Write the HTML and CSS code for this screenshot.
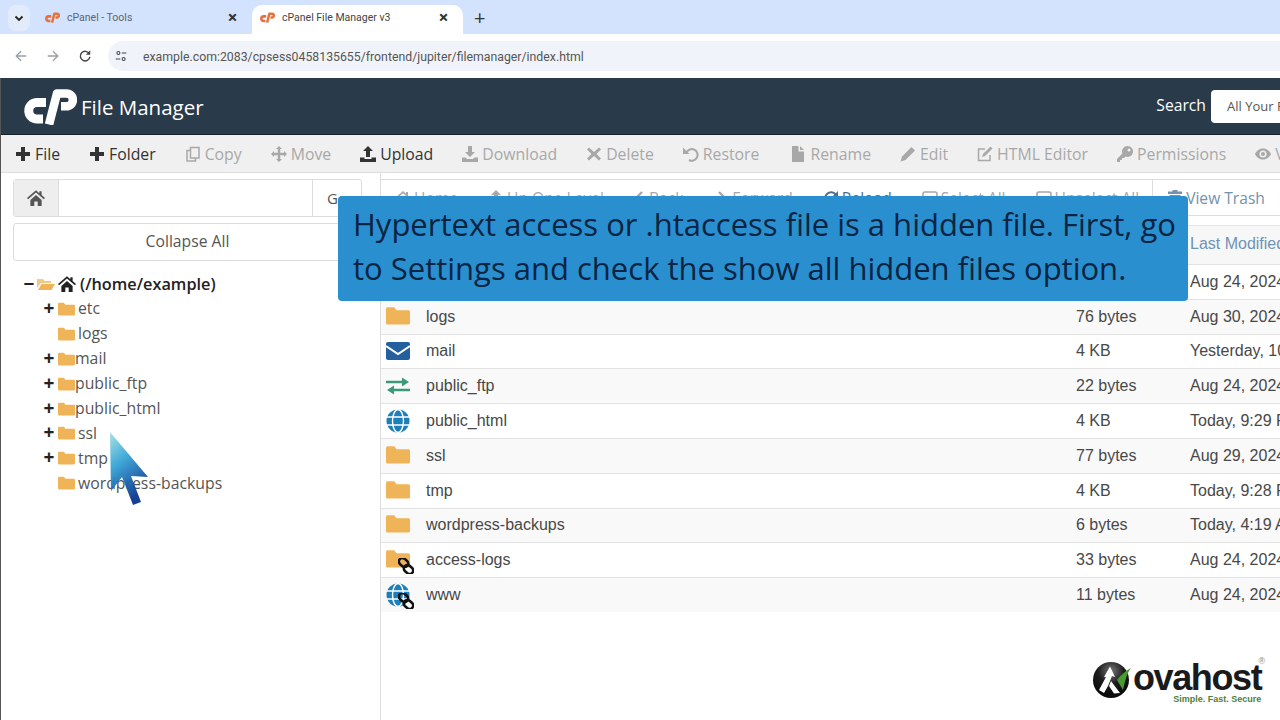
FILE: index.html

```html
<!DOCTYPE html>
<html lang="en">
<head>
  <meta charset="UTF-8" />
  <meta name="viewport" content="width=device-width, initial-scale=1.0"/>
  <title>cPanel File Manager v3</title>
  <link rel="stylesheet" href="styles.css">
</head>
<body>
  <svg class="sprite" xmlns="http://www.w3.org/2000/svg">
    <symbol id="i-cp" viewBox="0 0 53 37"><path fill="none" stroke="currentColor" stroke-width="9" d="M22 14.500H13a8.250 8.250 0 0 0 0 16.500h6"/><path fill="none" stroke="currentColor" stroke-width="8.600" stroke-linejoin="round" d="M25 36.500L33 5.500H42.500a6.400 6.400 0 0 1 0 12.800H37"/></symbol>
    <symbol id="i-plus" viewBox="0 0 16 16"><path d="M6 1h4v5h5v4h-5v5H6v-5H1V6h5z"/></symbol>
    <symbol id="i-copy" viewBox="0 0 16 16"><path fill="none" stroke="currentColor" stroke-width="1.500" d="M5.500 1.500h8.500v10.500H5.500zM5.500 4.500H2v10.500h8.500V12"/></symbol>
    <symbol id="i-move" viewBox="0 0 16 16"><path d="M8 0l3 3H9.200v3.800H13V5l3 3-3 3V9.200H9.200V13H11l-3 3-3-3h1.800V9.200H3V11L0 8l3-3v1.800h3.800V3H5z"/></symbol>
    <symbol id="i-upload" viewBox="0 0 16 16"><path d="M8 0l5 5h-3v6H6V5H3zM0 11.500h4.500v1.500h7v-1.500H16V16H0z"/></symbol>
    <symbol id="i-download" viewBox="0 0 16 16"><path d="M6 0h4v6h3l-5 5-5-5h3zM0 11.500h3.500l1.500 1.500h6l1.500-1.500H16V16H0z"/></symbol>
    <symbol id="i-times" viewBox="0 0 16 16"><path d="M3 1.500l5 4.500 5-4.500L15 3.500 10.500 8l4.500 4.500-2 2-5-4.500-5 4.500-2-2L5.500 8 1 3.500z"/></symbol>
    <symbol id="i-undo" viewBox="0 0 16 16"><path fill="none" stroke="currentColor" stroke-width="2" d="M3.500 6.500A5.800 5.800 0 1 1 6 14"/><path d="M0 1.500l6.500 6.500H0z"/></symbol>
    <symbol id="i-file" viewBox="0 0 16 16"><path d="M2 0h6.500v5.500H14V16H2zM10 0l4 4h-4z"/></symbol>
    <symbol id="i-pencil" viewBox="0 0 16 16"><path d="M11.500 1l3.500 3.500-9.500 9.500-5 1.500 1.500-5z"/></symbol>
    <symbol id="i-edit" viewBox="0 0 16 16"><path fill="none" stroke="currentColor" stroke-width="1.500" d="M13 9v5.500H1.500V3H8"/><path d="M13.500 0.500l2 2-7.500 7.500-3 1 1-3z"/></symbol>
    <symbol id="i-key" viewBox="0 0 16 16"><path fill-rule="evenodd" d="M10.500 0a5.500 5.500 0 1 1-2 10.600L7 12H5v2H3v2H0v-3l5.400-5.400A5.500 5.500 0 0 1 10.500 0zm1.500 2.500a1.500 1.500 0 1 0 0 3 1.500 1.500 0 0 0 0-3z"/></symbol>
    <symbol id="i-eye" viewBox="0 0 16 16"><path fill-rule="evenodd" d="M0 8c2-4 5-5.500 8-5.500S14 4 16 8c-2 4-5 5.500-8 5.500S2 12 0 8zm8-3.500a3.500 3.500 0 1 0 0 7 3.500 3.500 0 0 0 0-7zM8 6a2 2 0 1 1 0 4 2 2 0 0 1 0-4z"/></symbol>
    <symbol id="i-home" viewBox="0 0 16 16"><path d="M8 1L0 8l1 1.200 7-6 7 6L16 8l-3-2.600V2h-2v1.700zM3 9.800L8 5.400l5 4.400V15H9.500v-4h-3v4H3z"/></symbol>
    <symbol id="i-folder" viewBox="0 0 16 16"><path d="M0 3.500a1 1 0 0 1 1-1h4.500l1.500 2h8a1 1 0 0 1 1 1v8a1 1 0 0 1-1 1H1a1 1 0 0 1-1-1z"/></symbol>
    <symbol id="i-dir" viewBox="0 0 16 16"><path d="M0 2.500a1 1 0 0 1 1-1h4.500l1.500 2h8a1 1 0 0 1 1 1v7.500a1 1 0 0 1-1 1H1a1 1 0 0 1-1-1z"/></symbol>
    <symbol id="i-folder-open" viewBox="0 0 18 16"><path opacity=".75" d="M0 3h6l1.500 2H14v2H4L0 12z"/><path d="M4.500 8H18l-3.500 6H1z"/></symbol>
    <symbol id="i-link" viewBox="0 0 16 16"><g fill="none" stroke="currentColor" stroke-width="2.600"><rect x="0.500" y="1" width="10" height="7" rx="3.500" transform="rotate(40 5.500 4.500)"/><rect x="5.500" y="8" width="10" height="7" rx="3.500" transform="rotate(40 10.500 11.500)"/></g></symbol>
    <symbol id="i-mail" viewBox="0 0 24 18"><rect width="24" height="18" rx="2" fill="#24609f"/><path fill="none" stroke="#fff" stroke-width="2" d="M0 4l12 8 12-8"/></symbol>
    <symbol id="i-ftp" viewBox="0 0 24 18"><path fill="#3c9a7c" d="M0 3.800h16V.500L23 5l-7 4.500V6.200H0zM24 11.800H8V8.500L1 13l7 4.500v-3.300h16z"/></symbol>
    <symbol id="i-globe" viewBox="0 0 24 24"><circle cx="12" cy="12" r="11.500" fill="#1d7fb9"/><g fill="none" stroke="#fff" stroke-width="1.400"><ellipse cx="12" cy="12" rx="5.500" ry="11.500"/><path d="M1 8h22M1 16h22"/></g></symbol>
    <symbol id="i-trash" viewBox="0 0 16 16"><path d="M5.500 0h5v1.500H15V4H1V1.500h4.500zM2.500 5h11v11h-11z"/></symbol>
    <symbol id="i-reload" viewBox="0 0 16 16"><path fill="none" stroke="currentColor" stroke-width="2" d="M13 5a6 6 0 1 0 1 4"/><path d="M15 1v6H9z"/></symbol>
    <symbol id="i-square" viewBox="0 0 16 16"><rect x="1" y="2" width="14" height="12" rx="2" fill="none" stroke="currentColor" stroke-width="1.600"/></symbol>
    <symbol id="i-prev" viewBox="0 0 10 16"><path fill="none" stroke="currentColor" stroke-width="2.400" d="M8 2L2 8l6 6"/></symbol>
    <symbol id="i-next" viewBox="0 0 10 16"><path fill="none" stroke="currentColor" stroke-width="2.400" d="M2 2l6 6-6 6"/></symbol>
  </svg>

  <div class="tabstrip">
    <div class="tab-menu">
      <svg width="10" height="10" viewBox="0 0 10 10"><path fill="none" stroke="#222" stroke-width="1.800" d="M1.500 3.500L5 7l3.500-3.500"/></svg>
    </div>
    <div class="tab">
      <svg class="favicon"><use href="#i-cp"/></svg>
      <span class="tab-title">cPanel - Tools</span>
      <span class="tab-x">×</span>
    </div>
    <div class="tab active">
      <svg class="favicon"><use href="#i-cp"/></svg>
      <span class="tab-title">cPanel File Manager v3</span>
      <span class="tab-x">×</span>
    </div>
    <span class="tab-new">+</span>
  </div>

  <div class="addrbar">
    <svg class="nav" viewBox="0 0 16 16"><path fill="none" stroke="#9aa0a6" stroke-width="1.500" d="M14 8H2.500M8 2.500L2.500 8 8 13.500"/></svg>
    <svg class="nav" viewBox="0 0 16 16"><path fill="none" stroke="#9aa0a6" stroke-width="1.500" d="M2 8h11.500M8 2.500L13.500 8 8 13.500"/></svg>
    <svg class="nav" viewBox="0 0 16 16"><path fill="none" stroke="#444" stroke-width="1.600" d="M13 5.500a5.500 5.500 0 1 0 .6 3.500"/><path fill="#444" d="M14 1.500v5H9z"/></svg>
    <div class="urlpill">
      <svg class="tune" viewBox="0 0 16 16"><g fill="none" stroke="#444" stroke-width="1.400"><circle cx="4.500" cy="4" r="2"/><path d="M9 4h6M1 12h6"/><circle cx="11.500" cy="12" r="2"/></g></svg>
      <span class="url">example.com:2083/cpsess0458135655/frontend/jupiter/filemanager/index.html</span>
    </div>
  </div>

  <div class="app">
    <header class="topbar">
      <svg class="logo"><use href="#i-cp"/></svg>
      <span class="product">File Manager</span>
      <div class="search">
        <span class="search-label">Search</span>
        <div class="search-select">All Your Files</div>
      </div>
    </header>

    <nav class="toolbar">
      <a class="tool on"><svg><use href="#i-plus"/></svg>File</a>
      <a class="tool on"><svg><use href="#i-plus"/></svg>Folder</a>
      <a class="tool"><svg><use href="#i-copy"/></svg>Copy</a>
      <a class="tool"><svg><use href="#i-move"/></svg>Move</a>
      <a class="tool on"><svg><use href="#i-upload"/></svg>Upload</a>
      <a class="tool"><svg><use href="#i-download"/></svg>Download</a>
      <a class="tool"><svg><use href="#i-times"/></svg>Delete</a>
      <a class="tool"><svg><use href="#i-undo"/></svg>Restore</a>
      <a class="tool wide"><svg><use href="#i-file"/></svg>Rename</a>
      <a class="tool"><svg><use href="#i-pencil"/></svg>Edit</a>
      <a class="tool"><svg><use href="#i-edit"/></svg>HTML Editor</a>
      <a class="tool"><svg><use href="#i-key"/></svg>Permissions</a>
      <a class="tool"><svg><use href="#i-eye"/></svg>View</a>
    </nav>

    <div class="main">
      <aside class="left">
        <div class="pathbox">
          <span class="pathhome"><svg><use href="#i-home"/></svg></span>
          <span class="pathinput"></span>
          <span class="pathgo">Go</span>
        </div>
        <div class="collapse">Collapse All</div>
        <ul class="tree">
          <li class="root">
            <span class="sign">−</span>
            <svg class="tf-open"><use href="#i-folder-open"/></svg>
            <svg class="tf-home"><use href="#i-home"/></svg>
            <b>(/home/example)</b>
          </li>
          <li><span class="sign">+</span><svg class="tf"><use href="#i-folder"/></svg><span class="far">etc</span></li>
          <li><span class="sign"></span><svg class="tf"><use href="#i-folder"/></svg><span class="far">logs</span></li>
          <li><span class="sign">+</span><svg class="tf"><use href="#i-folder"/></svg><span>mail</span></li>
          <li><span class="sign">+</span><svg class="tf"><use href="#i-folder"/></svg><span>public_ftp</span></li>
          <li><span class="sign">+</span><svg class="tf"><use href="#i-folder"/></svg><span>public_html</span></li>
          <li><span class="sign">+</span><svg class="tf"><use href="#i-folder"/></svg><span class="far">ssl</span></li>
          <li><span class="sign">+</span><svg class="tf"><use href="#i-folder"/></svg><span class="far">tmp</span></li>
          <li><span class="sign"></span><svg class="tf"><use href="#i-folder"/></svg><span class="far">wordpress-backups</span></li>
        </ul>
      </aside>

      <section class="right">
        <div class="actions">
          <a class="act home"><svg><use href="#i-home"/></svg>Home</a>
          <a class="act up"><svg><use href="#i-upload"/></svg>Up One Level</a>
          <a class="act chev"><svg><use href="#i-prev"/></svg>Back</a>
          <a class="act chev next"><svg><use href="#i-next"/></svg>Forward</a>
          <a class="act strong"><svg><use href="#i-reload"/></svg>Reload</a>
          <a class="act"><svg><use href="#i-square"/></svg>Select All</a>
          <a class="act"><svg><use href="#i-square"/></svg>Unselect All</a>
          <a class="act trash"><svg><use href="#i-trash"/></svg>View Trash</a>
        </div>
        <div class="thead">
          <span class="c-name">Name</span>
          <span class="c-size">Size</span>
          <span class="c-date">Last Modified</span>
        </div>
        <div class="row"><span class="c-icon"><svg class="fi"><use href="#i-dir"/></svg></span><span class="c-name">etc</span><span class="c-size">4 KB</span><span class="c-date">Aug 24, 2024</span></div>
        <div class="row"><span class="c-icon"><svg class="fi"><use href="#i-dir"/></svg></span><span class="c-name">logs</span><span class="c-size">76 bytes</span><span class="c-date">Aug 30, 2024</span></div>
        <div class="row"><span class="c-icon"><svg class="fi mail"><use href="#i-mail"/></svg></span><span class="c-name">mail</span><span class="c-size">4 KB</span><span class="c-date">Yesterday, 10:12 PM</span></div>
        <div class="row"><span class="c-icon"><svg class="fi mail"><use href="#i-ftp"/></svg></span><span class="c-name">public_ftp</span><span class="c-size">22 bytes</span><span class="c-date">Aug 24, 2024</span></div>
        <div class="row"><span class="c-icon"><svg class="fi"><use href="#i-globe"/></svg></span><span class="c-name">public_html</span><span class="c-size">4 KB</span><span class="c-date">Today, 9:29 PM</span></div>
        <div class="row"><span class="c-icon"><svg class="fi"><use href="#i-dir"/></svg></span><span class="c-name">ssl</span><span class="c-size">77 bytes</span><span class="c-date">Aug 29, 2024</span></div>
        <div class="row"><span class="c-icon"><svg class="fi"><use href="#i-dir"/></svg></span><span class="c-name">tmp</span><span class="c-size">4 KB</span><span class="c-date">Today, 9:28 PM</span></div>
        <div class="row"><span class="c-icon"><svg class="fi"><use href="#i-dir"/></svg></span><span class="c-name">wordpress-backups</span><span class="c-size">6 bytes</span><span class="c-date">Today, 4:19 AM</span></div>
        <div class="row"><span class="c-icon"><svg class="fi"><use href="#i-dir"/></svg><svg class="linked"><use href="#i-link"/></svg></span><span class="c-name">access-logs</span><span class="c-size">33 bytes</span><span class="c-date">Aug 24, 2024</span></div>
        <div class="row"><span class="c-icon"><svg class="fi"><use href="#i-globe"/></svg><svg class="linked"><use href="#i-link"/></svg></span><span class="c-name">www</span><span class="c-size">11 bytes</span><span class="c-date">Aug 24, 2024</span></div>
      </section>
    </div>
  </div>

  <div class="caption">Hypertext access or .htaccess file is a hidden file. First, go to Settings and check the show all hidden files option.</div>

  <svg class="cursor" viewBox="0 0 40 74">
    <defs>
      <linearGradient id="cursor-fill" x1="0" y1="0" x2="0.400" y2="1">
        <stop offset="0" stop-color="#a5e4e6"/>
        <stop offset="0.450" stop-color="#35a3d6"/>
        <stop offset="1" stop-color="#0b3690"/>
      </linearGradient>
    </defs>
    <path fill="url(#cursor-fill)" d="M0 0L38 45 21 44 31 70 23 73 12 45 1 59z"/>
  </svg>

  <div class="brand">
    <svg class="brand-mark" viewBox="0 0 40 40">
      <defs>
        <radialGradient id="brand-gloss" cx="0.500" cy="0.250" r="0.650">
          <stop offset="0" stop-color="#777"/>
          <stop offset="0.550" stop-color="#1c1c1c"/>
          <stop offset="1" stop-color="#0c0c0c"/>
        </radialGradient>
      </defs>
      <circle cx="20" cy="21" r="18" fill="url(#brand-gloss)"/>
      <path fill="#fff" d="M19 7.500L24 18l-3-1-4 10-4 7-5-3 7-13-2 0zM20 22l9 12-6 .500-5-7.500z"/>
      <path fill="#4a9a30" d="M26 21C29 17 34 12 40 9 36 14 34 22 32 31z"/>
    </svg>
    <div class="brand-text">
      <span class="brand-name">ovahost</span>
      <span class="brand-tag">Simple. Fast. Secure</span>
    </div>
    <span class="brand-reg">®</span>
  </div>
</body>
</html>
```

FILE: styles.css

```css
* {
  margin: 0; padding: 0; box-sizing: border-box;
}
html, body {
  width: 1280px;
  height: 720px;
  overflow: hidden;
}
body {
  background: #fff;
  color: #333;
  font-family: "Open Sans", "Liberation Sans", sans-serif;
  position: relative;
}
.sprite {
  display: none;
}

/* browser chrome */
.tabstrip {
  height: 34px;
  background: #d3e3fd;
  display: flex;
  align-items: flex-end;
  padding-left: 8px;
}
.tab-menu {
  width: 22px;
  height: 26px;
  margin-bottom: 3px;
  background: #e2ebfa;
  border-radius: 8px;
  display: flex;
  align-items: center;
  justify-content: center;
}
.tab {
  width: 222px;
  height: 29px;
  padding: 0 15px 4px 15px;
  display: flex;
  align-items: center;
  font-family: "Roboto", sans-serif;
  font-size: 10.5px;
  color: #5d6470;
}
.tab.active {
  background: #fff;
  border-radius: 10px 10px 0 0;
  width: 211px;
  padding-left: 8px;
  color: #444;
}
.favicon {
  width: 15px;
  height: 11px;
  color: #e8703a;
  margin-right: 7px;
  flex: none;
}
.tab-title {
  flex: 1;
}
.tab-x {
  font-size: 17px;
  font-weight: 700;
  color: #333;
  line-height: 1;
}
.tab-new {
  margin: 0 0 6px 11px;
  font-size: 20px;
  line-height: 1;
  color: #333;
}
.addrbar {
  height: 44px;
  background: #fff;
  display: flex;
  align-items: center;
  padding-left: 14px;
  gap: 18px;
}
.nav {
  width: 14px;
  height: 14px;
  flex: none;
}
.urlpill {
  flex: 1;
  height: 30px;
  margin-left: -2px;
  background: #f0f4fa;
  border-radius: 15px 0 0 15px;
  display: flex;
  align-items: center;
  padding-left: 7px;
}
.tune {
  width: 12px;
  height: 12px;
  margin-right: 16px;
}
.url {
  font-family: "Roboto", sans-serif;
  font-size: 12.300px;
  color: #555;
  padding-top: 1px;
}

/* cpanel page */
.app {
  border-left: 1px solid #555;
  height: 642px;
}
.topbar {
  height: 57px;
  background: #293a4a;
  border-bottom: 1px solid #16212b;
  display: flex;
  align-items: center;
  padding-left: 23px;
}
.logo {
  width: 53px;
  height: 37px;
  color: #fff;
  margin-right: 4px;
}
.product {
  font-size: 20.500px;
  color: #fff;
  margin-top: 1px;
}
.search {
  margin-left: auto;
  display: flex;
  align-items: center;
  gap: 5px;
  margin-right: -41px;
}
.search-label {
  color: #fff;
  font-size: 15.700px;
  margin-bottom: 3px;
}
.search-select {
  width: 110px;
  height: 33px;
  background: #fff;
  border-radius: 4px;
  font-size: 13px;
  line-height: 33px;
  padding-left: 16px;
  color: #555;
}
.toolbar {
  height: 38px;
  background: #f0f0f0;
  border-bottom: 1px solid #ddd;
  display: flex;
  align-items: center;
  padding-left: 14px;
  gap: 29px;
  white-space: nowrap;
  overflow: hidden;
  font-size: 15.800px;
  color: #a8a8a8;
}
.tool {
  display: flex;
  align-items: center;
  gap: 4px;
  fill: currentColor;
}
.tool svg {
  width: 16px;
  height: 16px;
  flex: none;
}
.tool.on {
  color: #333;
}
.tool.wide {
  margin-left: 2px;
}
.main {
  display: flex;
  height: 547px;
}
.left {
  width: 380px;
  flex: none;
  border-right: 1px solid #ddd;
  padding: 6px 18px 0 12px;
}
.pathbox {
  height: 38px;
  border: 1px solid #ddd;
  border-radius: 3px;
  display: flex;
  align-items: stretch;
  font-size: 15px;
}
.pathhome {
  width: 45px;
  background: #eee;
  border-right: 1px solid #ddd;
  display: flex;
  align-items: center;
  justify-content: center;
  fill: #555;
}
.pathhome svg {
  width: 18px;
  height: 18px;
}
.pathinput {
  flex: 1;
}
.pathgo {
  width: 49px;
  border-left: 1px solid #ddd;
  padding-left: 14px;
  line-height: 36px;
  color: #555;
}
.collapse {
  height: 38px;
  margin-top: 6px;
  border: 1px solid #ddd;
  border-radius: 3px;
  text-align: center;
  line-height: 35px;
  font-size: 15.700px;
  color: #555;
}
.tree {
  list-style: none;
  margin-top: 11px;
  font-size: 15.800px;
  color: #555;
}
.tree li {
  height: 24.900px;
  display: flex;
  align-items: center;
  padding-left: 28px;
}
.tree .sign {
  width: 16px;
  flex: none;
  font-size: 19px;
  font-weight: 700;
  color: #222;
  line-height: 1;
  text-align: center;
}
.tf {
  width: 17px;
  height: 17px;
  fill: #f0b458;
  flex: none;
  margin-left: 1px;
}
.tree .far {
  margin-left: 3px;
}
.tree .root {
  padding-left: 9px;
  color: #222;
  height: 24px;
  font-size: 16.300px;
}
.tree .root .sign {
  width: 14px;
}
.tf-open {
  width: 18px;
  height: 16px;
  fill: #f0b458;
  margin-left: 1px;
  flex: none;
}
.tf-home {
  width: 18px;
  height: 18px;
  margin: 0 4px 0 3px;
  fill: #222;
  flex: none;
}
.tree b {
  font-weight: 600;
}

.right {
  flex: 1;
  min-width: 0;
  padding-top: 6px;
  font-family: "Liberation Sans", sans-serif;
  font-size: 16px;
  color: #484848;
}
.actions {
  height: 37px;
  border: 1px solid #ddd;
  border-left: none;
  border-right: none;
  display: flex;
  align-items: center;
  padding-left: 14px;
  gap: 30px;
  font-family: "Open Sans", sans-serif;
  font-size: 15.600px;
  color: #a8a8a8;
  white-space: nowrap;
  overflow: hidden;
}
.act {
  display: flex;
  align-items: center;
  gap: 3px;
  fill: currentColor;
}
.act svg {
  width: 16px;
  height: 16px;
  flex: none;
}
.act.chev {
  gap: 5px;
}
.act.chev svg {
  width: 10px;
}
.act.next {
  margin-left: 4px;
}
.act.strong {
  color: #4d6f8f;
}
.act.trash {
  margin-left: -17px;
  padding-left: 14px;
  border-left: 1px solid #ddd;
  height: 100%;
  color: #7492ad;
}
.thead {
  margin-top: 9px;
  height: 39px;
  padding-bottom: 2px;
  border-top: 1px solid #e5e5e5;
  background: #f7f7f7;
  display: flex;
  align-items: center;
  color: #6f93b5;
}
.row {
  height: 34.800px;
  display: flex;
  align-items: center;
  border-top: 1px solid #e3e3e3;
  background: #fff;
}
.row:nth-of-type(even) {
  background: #f9f9f9;
}
.c-icon {
  width: 45px;
  padding-left: 5px;
  flex: none;
  position: relative;
  display: flex;
}
.c-name {
  width: 650px;
  flex: none;
}
.thead .c-name {
  margin-left: 45px;
}
.c-size {
  width: 114px;
  flex: none;
}
.c-date {
  white-space: nowrap;
}
.fi {
  width: 24px;
  height: 24px;
  fill: #f0b458;
}
.fi.mail {
  height: 18px;
  margin: 3px 0;
}
.linked {
  position: absolute;
  left: 17px;
  top: 10px;
  width: 16px;
  height: 16px;
  color: #111;
}

/* video overlays */
.caption {
  position: absolute;
  left: 338px;
  top: 196px;
  width: 850px;
  height: 105px;
  padding: 6px 10px 0 15px;
  background: #2a8fcf;
  border-radius: 4px;
  font-size: 31px;
  line-height: 44px;
  color: #0a2442;
}
.cursor {
  position: absolute;
  left: 110px;
  top: 432px;
  width: 40px;
  height: 74px;
  opacity: 0.95;
}
.brand {
  position: absolute;
  left: 1091px;
  top: 659px;
  display: flex;
  font-family: "Liberation Sans", sans-serif;
}
.brand-mark {
  width: 40px;
  height: 40px;
  flex: none;
}
.brand-text {
  display: flex;
  flex-direction: column;
  align-items: flex-end;
  margin: 3px 0 0 2px;
}
.brand-name {
  font-size: 36px;
  font-weight: 700;
  line-height: 32px;
  letter-spacing: -1.400px;
  color: #1a1a1a;
}
.brand-tag {
  font-size: 9px;
  font-weight: 700;
  color: #4d7f3c;
  line-height: 11px;
  margin-top: 0;
}
.brand-reg {
  position: absolute;
  right: -4px;
  top: -3px;
  font-size: 9px;
  color: #888;
}
```
